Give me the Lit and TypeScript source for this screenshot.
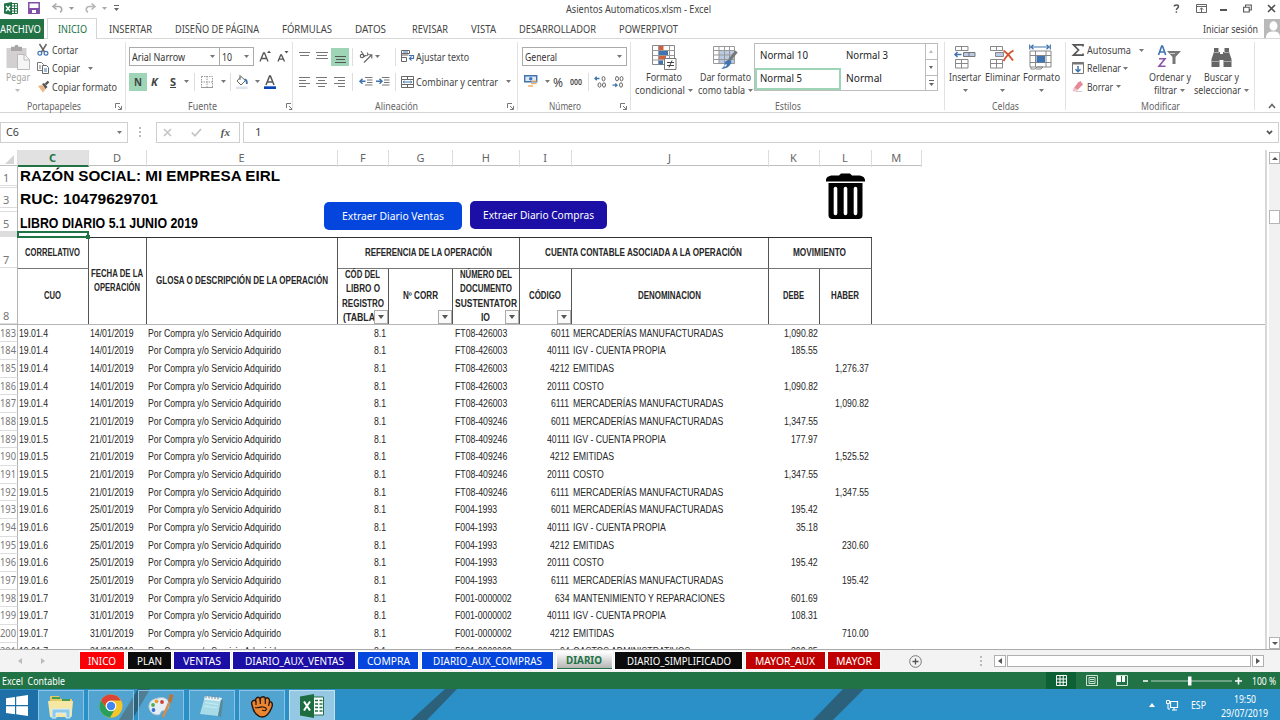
import { LitElement, html, css, svg, nothing } from "lit";
import { customElement, property } from "lit/decorators.js";
import { classMap } from "lit/directives/class-map.js";

/** A single line of text condensed horizontally to a width (w) or by a factor (s). */
@customElement("fit-text")
class FitText extends LitElement {
  @property({ type: Number }) w = 0;
  @property({ type: Number }) s = 0;
  static styles = css`
    :host { display: inline-block; white-space: pre; flex: none; text-align: left; }
    .run { display: inline-block; transform-origin: 0 50%; }
  `;
  render() {
    return html`<span class="run"><slot></slot></span>`;
  }
  firstUpdated() {
    const run = this.renderRoot.querySelector(".run") as HTMLElement;
    const natural = run.getBoundingClientRect().width;
    if (!natural) return;
    const factor = this.w ? this.w / natural : this.s || 1;
    this.style.width = `${natural * factor}px`;
    run.style.transform = `scaleX(${factor})`;
  }
}

const ft = (text: string, w: number) => html`<fit-text .w=${w}>${text}</fit-text>`;
const nar = (text: string) => html`<fit-text .s=${0.829}>${text}</fit-text>`;
const ic = (w: number, h: number, body: unknown) =>
  html`<svg class="ic" width=${w} height=${h} viewBox="0 0 ${w} ${h}" fill="none">${body}</svg>`;
const arrow = (c = "#777") => ic(5, 3, svg`<path d="M0 0H5L2.5 3Z" fill=${c} />`);
const lines = (...spans: [number, number][]) =>
  ic(12, 11, spans.map(([x, w], i) => svg`<path d="M${x} ${1.5 + i * 3}h${w}" stroke="#777" />`));
const launcher = ic(7, 7, svg`<path d="M.5 5V.5H5M3 3L6 6M6.5 3v3.5H3" stroke="#777" />`);

const ICONS = {
  excelSmall: ic(14, 13, svg`<path d="M7 1.5h6.5v10H7" fill="#fff" stroke="#217346"/><path d="M8 4h5M8 6.5h5M8 9h5M10.5 2v9" stroke="#217346"/><path d="M0 1.5L8 0v13L0 11.5Z" fill="#217346"/><path d="M2 4l4 5M6 4L2 9" stroke="#fff" stroke-width="1.3"/>`),
  save: ic(12, 12, svg`<path d="M.8.8h10.4v10.4H.8Z" stroke="#8050a8" stroke-width="1.5"/><path d="M1 6h10v5H1Z" fill="#8050a8"/><path d="M4 8h4v3H4Z" fill="#fff"/>`),
  undo: ic(12, 10, svg`<path d="M4.5.5L1 3.5l3.5 3M1.5 3.5H7a3 3 0 0 1 1 5.7" stroke="#aaa" stroke-width="1.6"/>`),
  redo: ic(12, 10, svg`<path d="M7.5.5L11 3.5l-3.5 3M10.5 3.5H5a3 3 0 0 0-1 5.7" stroke="#b5b5b5" stroke-width="1.6"/>`),
  custom: ic(5, 6, svg`<path d="M0 .5h5" stroke="#666"/><path d="M0 3h5L2.5 6Z" fill="#666"/>`),
  help: ic(7, 9, svg`<path d="M1.3 2.6C1.3.4 5.5.4 5.5 2.6 5.5 4.3 3.4 4 3.4 6M3.4 7.2v1.6" stroke="#555" stroke-width="1.5"/>`),
  ribbonOpt: ic(11, 9, svg`<path d="M.5.5h10v8H.5ZM.5 2.5h10M5.5 8V4M3.7 5.7l1.8-1.8 1.8 1.8" stroke="#666"/>`),
  min: ic(7, 9, svg`<path d="M0 6h7" stroke="#555" stroke-width="2"/>`),
  restore: ic(9, 9, svg`<path d="M.6 3.2h5.6V8H.6ZM2.5 3V1h5.8v5H6.3" stroke="#555" stroke-width="1.1"/>`),
  close: ic(9, 9, svg`<path d="M1 1l7 7M8 1L1 8" stroke="#555" stroke-width="1.6"/>`),
  avatar: ic(16, 19, svg`<path d="M0 0h16v19H0Z" fill="#b9b9b9"/><ellipse cx="9.500" cy="7" rx="4" ry="4.700" fill="#fff"/><path d="M2 19c0-5 3-6.500 7.500-6.500S16 14 16 19Z" fill="#fff"/>`),
  paste: ic(24, 25, svg`<path d="M.5 3h20v20H.5Z" fill="#d3d0d2"/><path d="M5 1.800h3.500a2 2 0 0 1 4 0H16V6H5Z" fill="#aaa6a8"/><path d="M11.500 9.500h7l5 5v10h-12Z" fill="#f6f5f6" stroke="#bbb"/><path d="M18 9.500V15h5" stroke="#bbb"/>`),
  cut: ic(12, 12, svg`<path d="M2.500 0l5 8M9.500 0l-5 8" stroke="#666" stroke-width="1.500"/><circle cx="2.800" cy="9.300" r="1.900" stroke="#3f74b0" stroke-width="1.200"/><circle cx="9" cy="9.300" r="1.900" stroke="#3f74b0" stroke-width="1.200"/>`),
  copy: ic(12, 12, svg`<path d="M.5.5h4l2 2v6h-6ZM2 4h2M2 6h2" stroke="#777"/><path d="M5.500 3.500h4l2 2v6h-6Z" fill="#fff" stroke="#666"/><path d="M7 7h3M7 9h3" stroke="#3f74b0"/>`),
  brush: ic(13, 12, svg`<path d="M1 5l4-1 3.500 4-2.500 3.500Z" fill="#eeb580"/><path d="M5 3l2-1 3.500 4-2 2Z" fill="#555"/><path d="M8.500 3.500L11.500.5" stroke="#555" stroke-width="2.400"/>`),
  borders: ic(12, 12, svg`<path d="M.5.5h11v11H.5ZM6 0v12M0 6h12" stroke="#999" stroke-dasharray="1.500 1"/><path d="M0 11.500h12" stroke="#999"/>`),
  bucket: ic(14, 14, svg`<path d="M6 1.500L10.500 5.500 6 10 2 6Z" stroke="#666" fill="#fff"/><path d="M5 0v5" stroke="#666"/><path d="M9.500 4.500c2 .2 2.500 2 2.300 4.500" stroke="#3f74b0" stroke-width="1.900"/><path d="M1 11.500h11.500v2.500H1Z" fill="#dde6ee"/>`),
  fontColor: ic(14, 14, svg`<path d="M1 11.300h12V14H1Z" fill="#0b46b8"/><path d="M3 10L6.600 1h.8L11 10M4.500 7h5" stroke="#555" stroke-width="1.500"/>`),
  orient: ic(14, 13, svg`<circle cx="3" cy="6" r="1.700" stroke="#666" stroke-width="1.200"/><path d="M2 1l4 6M8 2.800a1.600 1.600 0 1 1-2 2.400M5 12.500L12.500 5M12.800 8.500V4.700H9.500" stroke="#666" stroke-width="1.100"/>`),
  outdent: ic(14, 9, svg`<path d="M6 .5h7.500M8 3h5.500M8 5.500h5.500M6 8h7.500" stroke="#777"/><path d="M1 4.200h5.500M3.500 1.700L1 4.200l2.500 2.500" stroke="#3f74b0" stroke-width="1.500"/>`),
  indent: ic(14, 9, svg`<path d="M6 .5h7.500M8 3h5.500M8 5.500h5.500M6 8h7.500" stroke="#777"/><path d="M0 4.200h6M3.500 1.700L6 4.200 3.500 6.700" stroke="#3f74b0" stroke-width="1.500"/>`),
  wrap: ic(14, 13, svg`<path d="M.5.5h8v3h-8ZM.5 5h7M.5 7.500h5v4h-5M.5 3.500v8" stroke="#666"/><path d="M2 2h5" stroke="#3f74b0"/><path d="M8 5.500h4.500v3H8.500M10.500 6.500l-2 2 2 2" stroke="#3f74b0" stroke-width="1.200"/>`),
  merge: ic(13, 12, svg`<path d="M.5.5h12v11H.5ZM.5 3.500h12M.5 8.500h12M6.500 0v3.500M6.500 8.500V12" stroke="#666"/><path d="M2 6h9M3.500 4.800L2.200 6l1.300 1.200M9.500 4.800L10.800 6 9.500 7.200" stroke="#3f74b0"/>`),
  currency: ic(14, 13, svg`<path d="M.7.700h12v6H.7Z" stroke="#3f74b0" stroke-width="1.400" fill="#dce8f4"/><circle cx="6.700" cy="3.700" r="1.700" fill="#3f74b0"/><path d="M7.500 5.500h5v1.300h-5ZM7 8h5.500v1.300H7ZM4 10.300h5v1.500H4Z" fill="#efb168"/>`),
  incDec: ic(13, 12, svg`<path d="M1 2.500h4.500M2.700.8L1 2.500l1.700 1.700" stroke="#3f74b0" stroke-width="1.300"/><ellipse cx="9.500" cy="2.700" rx="1.500" ry="2.200" stroke="#666"/><ellipse cx="5.500" cy="9" rx="1.500" ry="2.200" stroke="#666"/><ellipse cx="10" cy="9" rx="1.500" ry="2.200" stroke="#666"/>`),
  decDec: ic(13, 12, svg`<path d="M.5 9.200H5M3.300 7.500L5 9.200l-1.700 1.700" stroke="#3f74b0" stroke-width="1.300"/><ellipse cx="5" cy="2.700" rx="1.500" ry="2.200" stroke="#666"/><ellipse cx="9.500" cy="2.700" rx="1.500" ry="2.200" stroke="#666"/><ellipse cx="9" cy="9" rx="1.500" ry="2.200" stroke="#666"/>`),
  condFmt: ic(25, 25, svg`<path d="M.5.5h22v19H.5Z" fill="#fff" stroke="#888"/><path d="M.5 5.500h22M.5 10.500h22M.5 15h22M6.500.5v19M17.500.5v19" stroke="#999"/><path d="M7 1h4.500v4H7ZM7 11h7v3.500H7Z" fill="#d0603e"/><path d="M7 6h9v4H7ZM7 15.500h4v4H7Z" fill="#3f74b0"/><path d="M12.500 13.500h11.500v11H12.500Z" fill="#fff" stroke="#777"/><path d="M15 17.500h7M15 20.500h7M20 15.500l-3 7" stroke="#444"/>`),
  tableFmt: ic(25, 25, svg`<path d="M.5 1.500h21v17H.5Z" fill="#fff" stroke="#999"/><path d="M6 6h15v12H6Z" fill="#b9cbe4"/><path d="M.5 5.500h21M.5 10h21M.5 14.500h21M6 1.500v17M11.500 1.500v17M16.500 1.500v17" stroke="#999"/><path d="M23.500 6.500L16.500 15" stroke="#777" stroke-width="3"/><path d="M16 14.500l2.500 2.300c-1 4-4 7-10.500 7.200 3.500-1.500 3-4.500 4.500-7.500Z" fill="#3f74b0"/><path d="M13.500 19.500l-2 2" stroke="#fff" stroke-width="1.500"/>`),
  insert: ic(22, 23, svg`<path d="M1.500.5h12.500v4H1.500ZM7.500.5v4M1.500 13.500h12.500v8.500H1.500ZM7.500 13.500V22M1.500 17.500h12.500" stroke="#888"/><path d="M9.500 6.500h11.500v4H9.500Z" fill="#b9cbe4" stroke="#777"/><path d="M15 6.500v4" stroke="#777"/><path d="M.5 8.500h7M3.500 6L1 8.500 3.500 11" stroke="#3f74b0" stroke-width="1.500"/>`),
  remove: ic(25, 23, svg`<path d="M.5.5h12v4H.5ZM6.500.5v4M.5 13.500h12v8.500H.5ZM6.500 13.500V22M.5 17.500h12" stroke="#888"/><path d="M5.500 6.500h8v4h-8Z" fill="#b9cbe4" stroke="#888"/><path d="M13.500 4.500c3 2 7 6 9.500 10M23.500 4.500c-4 2-7.500 6-10 10.500" stroke="#d35230" stroke-width="1.800"/>`),
  format: ic(24, 26, svg`<path d="M2 3h18M4.500.8L2 3l2.500 2.200M17.500.8L20 3l-2.500 2.200M.7.500v5M21.300.5v5" stroke="#3f74b0" stroke-width="1.200"/><path d="M1 7h21v16H1Z" fill="#fff" stroke="#888"/><path d="M1 11.500h21M1 18.500h21M6.500 7v16M17 7v16" stroke="#888"/><path d="M7.500 12h8.500v6.500H7.500Z" fill="#3f74b0"/><path d="M2 23v2h4l2-2h6l-2 2H7" stroke="#888"/>`),
  sigma: ic(12, 12, svg`<path d="M11 2.500V.900H1.500L6.500 6l-5 5.100H11V9.500" stroke="#555" stroke-width="1.700"/>`),
  fill: ic(12, 12, svg`<path d="M.5.5h11v11H.5Z" stroke="#777"/><path d="M.5 1.500h11" stroke="#777" stroke-width="2"/><path d="M6 4v6M3.500 7.300L6 9.800l2.500-2.500" stroke="#3f74b0" stroke-width="1.500"/>`),
  erase: ic(12, 11, svg`<path d="M6 1.500L8.500 0 11 3.500 5.500 9 2 7Z" fill="#e58a98"/><path d="M2 6.500l3.500 3-1.500 1H1.500L.5 9Z" fill="#f3c3ca"/><path d="M4 10.500h6" stroke="#ccc"/>`),
  sort: ic(25, 24, svg`<path d="M1.500 10L4.700 1h.8L8.700 10M3 7h4.500" stroke="#3f74b0" stroke-width="1.600"/><path d="M2 13.800h6L2 21.200h6.500" stroke="#8a56ac" stroke-width="1.600"/><path d="M10 6h14l-5.500 6v7h-3v-7Z" fill="#777"/><path d="M13 8.500h5" stroke="#ccc"/>`),
  find: ic(23, 21, svg`<path d="M4 1h4.500v4H10v2h3V5h1.500V1H19v4l2.500 7v8h-8v-7h-4v7h-8v-8L4 5Z" fill="#666"/><path d="M3.500 5.500h5.500M14 5.500h5.500M2 14.500h7M14 14.500h7" stroke="#aaa"/>`),
  chevUp: ic(8, 6, svg`<path d="M1 5l3-3.500L7 5" stroke="#666" stroke-width="1.600"/>`),
  chevDown: ic(7, 5, svg`<path d="M1 .8L3.500 3.500 6 .8" stroke="#555" stroke-width="1.800"/>`),
  cross: ic(9, 9, svg`<path d="M1 1l7 7M8 1L1 8" stroke="#c3c3c3" stroke-width="1.500"/>`),
  check: ic(11, 9, svg`<path d="M.8 4.500L4 7.800 10 1" stroke="#c3c3c3" stroke-width="1.700"/>`),
  trash: ic(41, 47, svg`<path d="M1 7.500C1 4 4 2.600 8 2.600h6L16 .5h9l2 2.100h6c4 0 7 1.400 7 4.900v1H1Z" fill="#000"/><path d="M3.500 10h34v32a4 4 0 0 1-4 4h-26a4 4 0 0 1-4-4Z" fill="#000"/><path d="M10.500 15.500v25M20.500 15.500v25M30.500 15.500v25" stroke="#fff" stroke-width="3.600" stroke-linecap="round"/>`),
  plus: ic(13, 13, svg`<circle cx="6.500" cy="6.500" r="5.800" stroke="#777"/><path d="M6.500 3.500v6M3.500 6.500h6" stroke="#555" stroke-width="1.300"/>`),
  viewNormal: ic(11, 11, svg`<path d="M.5.5h10v10H.5ZM.5 4h10M.5 7.200h10M4 .5v10M7.200.5v10" stroke="#fff"/>`),
  viewPage: ic(12, 11, svg`<path d="M.5.500h11v10H.5ZM3 2.500h6v6H3ZM4 4.500h4M4 6.500h4" stroke="#cfe3d7"/>`),
  viewBreak: ic(12, 11, svg`<path d="M.5.500h11v10H.5Z" stroke="#cfe3d7"/><path d="M1 1h4v6H1ZM6 1h3v6H6Z" fill="#fff"/>`),
  windows: ic(22, 21, svg`<path d="M0 3.200L9 2v8H0ZM10.200 1.800L22 0v10H10.200ZM0 11.200h9v8L0 18ZM10.200 11.200H22V21l-11.800-1.700Z" fill="#fff"/>`),
  folder: ic(28, 25, svg`<path d="M3 2h9l2 3h11v17H3Z" fill="#e4c964"/><path d="M5 4h8M15 6h8" stroke="#4a9a54" stroke-width="2"/><path d="M1 7h25l-1.500 16H3Z" fill="#f6e8a4"/><path d="M5 24v-9h18v9h-4v-5H9v5Z" fill="#8cc9ea" stroke="#d5effb"/>`),
  chrome: ic(24, 24, svg`<circle cx="12" cy="12" r="11.500" fill="#f5c62c"/><path d="M2 6.200A11.500 11.500 0 0 1 22 6.500H12a5.500 5.500 0 0 0-5 8Z" fill="#dc4437"/><path d="M2 6.200A11.500 11.500 0 0 0 11 23.500l5-8.500a5.500 5.500 0 0 1-9-1Z" fill="#26a05a"/><circle cx="12" cy="12" r="5.300" fill="#fff"/><circle cx="12" cy="12" r="4.200" fill="#4285f4"/>`),
  paint: ic(26, 26, svg`<path d="M10 5c7-2 12 2 11 8s-5 4-7 5-1 4-4 4C4 22 0 17 1 12s5-6 9-7Z" fill="#e4eef4" stroke="#a9bfcc"/><circle cx="5" cy="12" r="1.900" fill="#4caf50"/><circle cx="8.500" cy="8.300" r="1.900" fill="#e8a13a"/><circle cx="5.500" cy="17" r="1.900" fill="#3b6fd0"/><circle cx="14" cy="9" r="1.900" fill="#cf3f35"/><path d="M15 24L21 10" stroke="#d58c4b" stroke-width="2.500"/><path d="M20 9l1.500-8 4 1L23.500 10Z" fill="#b9753e"/>`),
  notepad: ic(25, 25, svg`<path d="M6 2l17 2-4 18L1 20Z" fill="#a8dbe8"/><path d="M6 2l17 2-.8 3.500-17-2Z" fill="#e7f3f5"/><path d="M22 5l2 2-2 16-3-1Z" fill="#5b8797"/><path d="M6 8.500l13 2M5 12l13 2" stroke="#c9edf5"/><path d="M7 1v3M10 1.300v3M13 1.700v3M16 2v3M19 2.300v3" stroke="#789"/>`),
  fist: ic(24, 23, svg`<path d="M2 10c-1.500-4 2-5.500 3.500-4C5.500 1.500 9.500 1.500 10 4c1-3 5-3 5.500 0C17 1.500 20 3 19.500 7c3-1 3.500 3 2 6-2 5-4.500 9-9 9S3.500 18 2 10Z" fill="#e88634" stroke="#2a160c" stroke-width="1.400"/><path d="M6 6v4M10.300 4v5M15.300 4v5M19.500 7l-1 4M5 12.500c3 1 5-1 8-.5s4 1.500 3 3-3 .5-4 0" stroke="#2a160c" stroke-width="1.200"/>`),
  excelBig: ic(24, 24, svg`<path d="M12 3h11.500v18H12" fill="#fff" stroke="#217346"/><path d="M15 6.500h3M19.500 6.500h3M15 10h3M19.500 10h3M15 13.500h3M19.500 13.500h3M15 17h3M19.500 17h3" stroke="#217346" stroke-width="1.600"/><path d="M0 2.500L14 0v24L0 21.500Z" fill="#1d6d40"/><path d="M4 7.500l6 9M10 7.500l-6 9" stroke="#fff" stroke-width="2"/>`),
  network: ic(12, 11, svg`<path d="M4.500 1.500h7v6h-7ZM6 10h5M8 8v2" stroke="#fff" stroke-width="1.200"/><path d="M.5.5h3v3h-3ZM2 3.500V9h2" stroke="#fff"/>`),
};

type Row = [number, string, string, string, string, string, string, string];
const G = "Por Compra y/o Servicio Adquirido";
const entry = (n: number, cuo: string, date: string, doc: string, cod: string, name: string, debe = "", haber = ""): Row =>
  [n, cuo, date, doc, cod, name, debe, haber];
const MM = "MERCADERÍAS MANUFACTURADAS";
const IGV = "IGV - CUENTA PROPIA";
const ROWS: Row[] = [
  entry(183, "19.01.4", "14/01/2019", "FT08-426003", "6011", MM, "1,090.82"),
  entry(184, "19.01.4", "14/01/2019", "FT08-426003", "40111", IGV, "185.55"),
  entry(185, "19.01.4", "14/01/2019", "FT08-426003", "4212", "EMITIDAS", "", "1,276.37"),
  entry(186, "19.01.4", "14/01/2019", "FT08-426003", "20111", "COSTO", "1,090.82"),
  entry(187, "19.01.4", "14/01/2019", "FT08-426003", "6111", MM, "", "1,090.82"),
  entry(188, "19.01.5", "21/01/2019", "FT08-409246", "6011", MM, "1,347.55"),
  entry(189, "19.01.5", "21/01/2019", "FT08-409246", "40111", IGV, "177.97"),
  entry(190, "19.01.5", "21/01/2019", "FT08-409246", "4212", "EMITIDAS", "", "1,525.52"),
  entry(191, "19.01.5", "21/01/2019", "FT08-409246", "20111", "COSTO", "1,347.55"),
  entry(192, "19.01.5", "21/01/2019", "FT08-409246", "6111", MM, "", "1,347.55"),
  entry(193, "19.01.6", "25/01/2019", "F004-1993", "6011", MM, "195.42"),
  entry(194, "19.01.6", "25/01/2019", "F004-1993", "40111", IGV, "35.18"),
  entry(195, "19.01.6", "25/01/2019", "F004-1993", "4212", "EMITIDAS", "", "230.60"),
  entry(196, "19.01.6", "25/01/2019", "F004-1993", "20111", "COSTO", "195.42"),
  entry(197, "19.01.6", "25/01/2019", "F004-1993", "6111", MM, "", "195.42"),
  entry(198, "19.01.7", "31/01/2019", "F001-0000002", "634", "MANTENIMIENTO Y REPARACIONES", "601.69"),
  entry(199, "19.01.7", "31/01/2019", "F001-0000002", "40111", IGV, "108.31"),
  entry(200, "19.01.7", "31/01/2019", "F001-0000002", "4212", "EMITIDAS", "", "710.00"),
  entry(201, "19.01.7", "31/01/2019", "F001-0000002", "94", "GASTOS ADMINISTRATIVOS", "392.85"),
];

const SHEETS: [string, string, number][] = [
  ["INICO", "red", 28], ["PLAN", "black", 25], ["VENTAS", "navy", 38], ["DIARIO_AUX_VENTAS", "navy", 99],
  ["COMPRA", "blue", 43], ["DIARIO_AUX_COMPRAS", "blue", 109], ["DIARIO", "current", 36],
  ["DIARIO_SIMPLIFICADO", "black", 104], ["MAYOR_AUX", "wine", 60], ["MAYOR", "wine", 36],
];

@customElement("app-root")
class AppRoot extends LitElement {
  static styles = css`
    :host { display: block; width: 1280px; height: 720px; overflow: hidden; background: #fff; color: #444;
      font: 11px/14px "Noto Sans", "Open Sans", sans-serif; }
    * { box-sizing: border-box; }
    .ic { display: block; flex: none; overflow: visible; }
    .g { display: grid; align-items: center; }
    .app { display: flex; flex-direction: column; height: 720px; }

    .title { height: 18px; grid-template-columns: 4px 24px 24px 17px 15px 18px 12px 452px 607px 23px 24px 23px 24px 13px; padding-bottom: 3px; color: #444; }
    .title .name { height: 14px; margin-top: 2px; }
    .tabs { height: 21px; border-bottom: 1px solid #d8d8d8; color: #444; font-size: 11px;
      grid-template-columns: 44px 3px 50px 12px 66px 107px 73px 57px 59px 48px 100px 584px 61px 16px; }
    .file { background: #217346; color: #fff; height: 20px; display: flex; align-items: center; }
    .active { height: 21px; border: 1px solid #d4d4d4; border-bottom: 0; background: #fff; color: #217346; display: flex; align-items: center; justify-content: center; }

    .ribbon { height: 74px; display: grid; grid-template-columns: 126px 167px 225px 112.5px 314px 121px 189px 26px; border-bottom: 1px solid #d5d5d5; }
    .group { display: grid; grid-template-rows: 60px 14px; position: relative; }
    .group::after { content: ""; position: absolute; right: 0; top: 3px; bottom: 3px; width: 1px; background: #e2e2e2; }
    .caption { display: grid; grid-template-columns: 1fr auto 1fr; align-items: center; color: #666; font-size: 10px; line-height: 12px; }
    .caption.launch { padding-right: 18px; }
    .caption .ic { justify-self: end; margin-right: -14px; }
    .two { display: grid; grid-template-rows: 20px 20px; row-gap: 5px; padding-top: 7.500px; align-items: center; }
    .stack3 { display: grid; grid-template-rows: repeat(3, 18.300px); padding-top: 2px; align-items: center; }
    .big { display: grid; grid-template-rows: 26px 14px 12px; padding-top: 5px; justify-items: center; align-items: center; }
    .big .foot { display: flex; align-items: center; gap: 3px; }
    .dim { color: #a5a5a5; }
    .sep { width: 1px; height: 18px; background: #dedede; }
    .clip { grid-template-columns: 37px 89px; align-items: start; }
    .clip .big { margin-left: -2px; }
    .clip .r { grid-template-columns: 15px 38px 20px; }
    .clip .r.c { grid-template-columns: 15px 36px 20px; }
    .box { display: flex; align-items: center; justify-content: space-between; border: 1px solid #ababab; height: 19px; padding: 0 4px 0 2px; background: #fff; color: #333; }
    .font { padding-left: 3px; }
    .f1 { grid-template-columns: 91px 34px 5px 18px 20px; }
    .f1 .box + .box { border-left: 0; }
    .f2 { grid-template-columns: 22px 19px 14px 10px 7px 20px 9px 5px 20px 8px 20px; }
    .on { background: #9fd5b7; height: 18px; width: 18px; display: flex; align-items: center; justify-content: center; }
    .b { font-weight: 700; } .i { font-style: italic; } .u { text-decoration: underline; }
    .align { padding-left: 6px; }
    .a1 { grid-template-columns: 17px 15px 21px 7px 16px 20px 6px 15px 60px; }
    .a2 { grid-template-columns: 17px 18px 18px 7px 17px 19px 6px 15px 90px 10px; }
    .num { padding-left: 3.500px; }
    .num .box { width: 105px; }
    .n2 { grid-template-columns: 21px 8px 17px 18px 6px 18px 14px; padding-left: 2px; }
    .pct { font-size: 13px; } .thousands { font-size: 8.500px; font-weight: 600; }
    .styles { grid-template-columns: 67px 52px 188px; align-items: start; }
    .gallery { margin: 4px 0 0 4px; height: 48px; border: 1px solid #bcbcbc; display: grid; grid-template-columns: 1fr 12px; font-size: 11.500px; }
    .cells { display: grid; grid-template-columns: 86px 84px; grid-template-rows: 23px 23px; align-items: center; color: #222; }
    .cells div { height: 22px; display: flex; align-items: center; border: 2px solid transparent; padding: 0 0 1px 3px; }
    .cells .sel { border-color: #9fd5b7; }
    .steps { display: grid; grid-template-rows: 1fr 1fr 1fr; border-left: 1px solid #bcbcbc; }
    .steps div { display: flex; align-items: center; justify-content: center; }
    .steps div + div { border-top: 1px solid #bcbcbc; }
    .cellsg { grid-template-columns: 37px 37px 41px; padding-left: 2px; align-items: start; }
    .edit { grid-template-columns: 74px 48px 56px; padding-left: 6px; align-items: start; }
    .edit .r1 { grid-template-columns: 15px 52px 5px; } .edit .r2 { grid-template-columns: 15px 36px 5px; } .edit .r3 { grid-template-columns: 15px 29px 5px; }
    .collapse { display: flex; align-items: flex-end; justify-content: center; padding: 0 0 4px 8px; }

    .formula { height: 37px; display: grid; align-items: center; padding-top: 1px; font-size: 11.500px;
      grid-template-columns: 128px 11px 17px 84px 3px 1036px; }
    .formula .fb { height: 21px; border: 1px solid #cfcfcf; display: flex; align-items: center; justify-content: space-between; padding: 0 5px; }
    .formula .tools { padding: 0 9px 0 6px; }
    .fx { font: italic 700 11px "Liberation Serif", serif; color: #555; }
    .dots { display: flex; flex-direction: column; gap: 2px; width: 2px; }
    .dots i { width: 2px; height: 2px; background: #bbb; }

    .mid { height: 499px; display: grid; grid-template-columns: 1268px 12px; }
    .sheet { border-right: 2px solid #d8d8d8; overflow: hidden; display: grid; grid-template-rows: 16px 158.500px 1fr; margin-right: 1px; }
    .cols { display: grid; width: 922px; grid-template-columns: 17.500px 71px 58px 191px 51.500px 64px 66.500px 52px 197px 51px 52px 50.300px; border-bottom: 1px solid #bfbfbf; font-size: 11px; color: #666; height: 16px; }
    .cols div { border-right: 1px solid #dcdcdc; text-align: center; line-height: 15px; }
    .cols .sel { background: #e1e1e1; color: #217346; font-weight: 700; border-bottom: 2px solid #217346; }
    .corner { display: flex; justify-content: flex-end; align-items: flex-end; padding: 0 3px 3px 0; }
    .frozen { display: grid; grid-template-columns: 17.500px 1fr; border-bottom: 1px solid #b5b5b5; overflow: hidden; }
    .heads { display: grid; grid-template-rows: 19.500px 2.500px 20px 4px 20px 5px 31px 1fr; border-right: 1px solid #b5b5b5; color: #777; }
    .heads div { border-bottom: 1px solid #ddd; display: flex; align-items: flex-end; justify-content: center; padding: 0 4px 1px 0; line-height: 12px; }
    .heads .sel { background: #ddd; }
    .arial { font-family: "Liberation Sans", Arial, sans-serif; color: #262626; }
    .top { height: 71px; position: relative; padding-left: 2.500px; font-weight: 700; color: #000; display: grid; grid-template-rows: 20px 25px 23px; align-items: center; font-size: 15.500px; line-height: 18px; }
    .top .narrow { font-size: 14.500px; }
    .shape { position: absolute; border-radius: 5px; color: #fff; font: 11.500px/14px "Noto Sans", sans-serif; display: flex; align-items: center; justify-content: center; padding-bottom: 1px; }
    .s1 { left: 306px; top: 36px; width: 138px; height: 28px; background: #0446dd; }
    .s2 { left: 452.500px; top: 35px; width: 137px; height: 28px; background: #1b0fa5; }
    .s3 { left: 807.500px; top: 7px; }
    .cursor { position: absolute; left: -1px; top: 65px; width: 72px; height: 7px; border: 2px solid #217346; z-index: 1; }
    .cursor::after { content: ""; position: absolute; right: -3px; bottom: -3px; width: 4px; height: 4px; background: #217346; }
    .hdr { display: grid; width: 854.500px; height: 87px; grid-template-columns: 71px 58px 191px 51.500px 64px 66.500px 52px 197px 51px 52.500px; grid-template-rows: 31px 55px; border-top: 1px solid #333; font-size: 10px; font-weight: 700; line-height: 14.300px; }
    .hdr > div { border-right: 1px solid #555; border-bottom: 1px solid #777; display: flex; flex-direction: column; align-items: center; justify-content: center; position: relative; }
    .hdr > .low { border-bottom: 0; min-height: 0; }
    .span2 { grid-column: span 2; } .span3 { grid-column: span 3; } .tall { grid-row: span 2; }
    .filter { position: absolute; right: 0; bottom: 0; width: 14px; height: 14px; background: #fafafa; border: 1px solid #aaa; display: flex; align-items: center; justify-content: center; }
    .body { overflow: hidden; font-size: 10.500px; }
    .row { display: grid; height: 17.680px; line-height: 16px;
      grid-template-columns: 17.500px 71px 58px 191px 49px 67.500px 64.500px 51px 199px 49.200px 51.300px; }
    .row > div { padding-left: 1.800px; }
    .row > .rh { height: 17.680px; border-right: 1px solid #b5b5b5; border-bottom: 1px solid #ddd; padding: 0; color: #777; font: 11px/16px "Noto Sans", sans-serif; display: flex; justify-content: flex-start; }
    .row > .r { text-align: right; padding: 0; }
    .row > .n { padding-left: 3.600px; }
    .row > .d { padding-left: 0.500px; }
    .vs { background: #f1f1f1; display: grid; grid-template-rows: 12px 46px 14px 1fr 12px; margin-top: 2px; margin-left: 1px; }
    .vs .btn { background: #fff; border: 1px solid #b5b5b5; display: flex; align-items: center; justify-content: center; }

    .sheets { height: 23px; border-top: 1px solid #ababab; background: #f3f3f3; display: grid; align-items: center; font-size: 11px;
      grid-template-columns: 18px 23px 39px 829px 71px 14px 270px; }
    .tabrow { display: grid; height: 22px; align-items: center; padding-bottom: 1px; grid-template-columns: 44px 43.200px 55.500px 121.300px 60px 131.500px 54.500px 127px 79px 52px; column-gap: 3.600px; }
    .tab { height: 17px; color: #fff; display: flex; align-items: center; justify-content: center; outline: 1px solid #fff; }
    .red { background: #fb0007; } .black { background: #0b0b0b; } .navy { background: #1b0fa5; } .blue { background: #0446dd; } .wine { background: #c00000; }
    .current { background: linear-gradient(#fff, #b5b5b5); color: #217346; font-weight: 700; border-bottom: 1px solid #217346; }
    .hs { display: grid; grid-template-columns: 12px 1fr 12px; column-gap: 1px; height: 12px; }
    .hs div { background: #fff; border: 1px solid #b0b0b0; display: flex; align-items: center; justify-content: center; }

    .status { height: 17px; background: #217346; color: #fff; display: grid; align-items: center; font-size: 10px; grid-template-columns: 2px 1044px 30px 31px 30px 6px 92px 17px 28px; }
    .status .vn { background: #0c6033; height: 17px; width: 30px; display: flex; align-items: center; justify-content: center; }
    .status .c { display: flex; justify-content: center; }

    .task { height: 31px; background: linear-gradient(#2c8fc6, #2991c8); display: grid; position: relative; color: #fff; grid-template-columns: 38px 298px 813px 17px 25px 27px 53px; align-items: center; overflow: hidden; }
    .streaks { position: absolute; left: 0; top: 0; }
    .start { height: 31px; background: #1e6fa8; display: flex; align-items: center; padding-left: 6px; z-index: 1; }
    .pins { display: grid; grid-template-columns: repeat(6, 46px); column-gap: 4.200px; z-index: 1; }
    .pin { height: 31px; margin-top: 1px; border: 1px solid #8cc3e2; border-bottom: 0; background: #ffffff2e; display: flex; align-items: center; justify-content: center; }
    .pin.live { background: #ffffff80; border-color: #c2e0f0; }
    .tray { font-size: 10px; }
    .clock { display: grid; grid-template-rows: 13.500px 13.500px; justify-items: center; font-size: 10px; line-height: 14px; padding-top: 1px; }
  `;

  private caption(text: string, w: number, launch = true) {
    return html`<div class=${classMap({ caption: true, launch })}><span></span>${ft(text, w)}${launch ? launcher : nothing}</div>`;
  }

  private big(icon: unknown, top: [string, number], foot: unknown) {
    return html`<div class="big">${icon}${ft(...top)}<div class="foot">${foot}${arrow()}</div></div>`;
  }

  private ribbon() {
    return html`
      <div class="ribbon">
        <div class="group">
          <div class="g clip">
            <div class="big dim">${ICONS.paste}${ft("Pegar", 24)}<div class="foot">${arrow("#bbb")}</div></div>
            <div class="stack3">
              <div class="g r">${ICONS.cut}${ft("Cortar", 26)}</div>
              <div class="g r c">${ICONS.copy}${ft("Copiar", 28)}${arrow()}</div>
              <div class="g r">${ICONS.brush}${ft("Copiar formato", 65)}</div>
            </div>
          </div>
          ${this.caption("Portapapeles", 54)}
        </div>
        <div class="group">
          <div class="two font">
            <div class="g f1">
              <div class="box">${ft("Arial Narrow", 53)}${arrow()}</div>
              <div class="box">${ft("10", 10)}${arrow()}</div><span></span>
              ${ic(12, 13, svg`<path d="M1 11.500L4.500 3h1L9 11.500M2.500 8.500h5" stroke="#555" stroke-width="1.300"/><path d="M8 3h4L10 .5Z" fill="#555"/>`)}
              ${ic(12, 13, svg`<path d="M1 11.500L3.700 5h.8L7.500 11.500M2 9.200h4.500" stroke="#555" stroke-width="1.300"/><path d="M7.500 1h4L9.500 3.500Z" fill="#555"/>`)}
            </div>
            <div class="g f2">
              <div class="on b">${ft("N", 8)}</div><span class="b i">K</span><span class="b u">S</span>${arrow()}
              <i class="sep"></i>${ICONS.borders}${arrow()}<i class="sep"></i>${ICONS.bucket}${arrow()}
              <div class="g">${ICONS.fontColor}</div>
            </div>
          </div>
          ${this.caption("Fuente", 29)}
        </div>
        <div class="group">
          <div class="two align">
            <div class="g a1">
              ${lines([0, 11], [1, 9])}${lines([0, 12], [1, 10], [0, 12])}
              <div class="on">${ic(11, 13, svg`<path d="M0 6.500h11M1 9.500h9M0 12.500h11" stroke="#555"/>`)}</div>
              <i class="sep"></i>${ICONS.orient}${arrow()}<i class="sep"></i>${ICONS.wrap}${ft("Ajustar texto", 53)}
            </div>
            <div class="g a2">
              ${lines([0, 11], [0, 7], [0, 11], [0, 7])}${lines([0, 11], [2, 7], [0, 11], [2, 7])}${lines([0, 11], [4, 7], [0, 11], [4, 7])}
              <i class="sep"></i>${ICONS.outdent}${ICONS.indent}<i class="sep"></i>${ICONS.merge}${ft("Combinar y centrar", 82)}${arrow()}
            </div>
          </div>
          ${this.caption("Alineación", 43)}
        </div>
        <div class="group">
          <div class="two num">
            <div class="box">${ft("General", 32)}${arrow()}</div>
            <div class="g n2">${ICONS.currency}${arrow()}<span class="pct">${ft("%", 10)}</span><span class="thousands">${ft("000", 12)}</span><i class="sep"></i>${ICONS.incDec}${ICONS.decDec}</div>
          </div>
          ${this.caption("Número", 32)}
        </div>
        <div class="group">
          <div class="g styles">
            ${this.big(ICONS.condFmt, ["Formato", 36], ft("condicional", 50))}
            ${this.big(ICONS.tableFmt, ["Dar formato", 51], ft("como tabla", 47))}
            <div class="gallery">
              <div class="cells">
                <div>${ft("Normal 10", 48)}</div><div>${ft("Normal 3", 42)}</div>
                <div class="sel">${ft("Normal 5", 42)}</div><div>${ft("Normal", 36)}</div>
              </div>
              <div class="steps">
                <div>${ic(4, 3, svg`<path d="M0 3h4L2 0Z" fill="#bbb"/>`)}</div><div>${ic(4, 3, svg`<path d="M0 0h4L2 3Z" fill="#666"/>`)}</div><div>${ICONS.custom}</div>
              </div>
            </div>
          </div>
          ${this.caption("Estilos", 26, false)}
        </div>
        <div class="group">
          <div class="g cellsg">
            ${this.big(ICONS.insert, ["Insertar", 32], nothing)}
            ${this.big(ICONS.remove, ["Eliminar", 35], nothing)}
            ${this.big(ICONS.format, ["Formato", 37], nothing)}
          </div>
          ${this.caption("Celdas", 27, false)}
        </div>
        <div class="group">
          <div class="g edit">
            <div class="stack3">
              <div class="g r1">${ICONS.sigma}${ft("Autosuma", 44)}${arrow()}</div>
              <div class="g r2">${ICONS.fill}${ft("Rellenar", 34)}${arrow()}</div>
              <div class="g r3">${ICONS.erase}${ft("Borrar", 26)}${arrow()}</div>
            </div>
            ${this.big(ICONS.sort, ["Ordenar y", 42], ft("filtrar", 23))}
            ${this.big(ICONS.find, ["Buscar y", 35], ft("seleccionar", 47))}
          </div>
          ${this.caption("Modificar", 39, false)}
        </div>
        <div class="collapse">${ICONS.chevUp}</div>
      </div>`;
  }

  private sheet() {
    const filter = html`<span class="filter">${ic(6, 4, svg`<path d="M0 0h6L3 4Z" fill="#555"/>`)}</span>`;
    return html`
      <div class="mid">
        <div class="sheet">
          <div class="cols">
            <div class="corner">${ic(9, 9, svg`<path d="M9 0v9H0Z" fill="#d5d5d5"/>`)}</div>
            ${[..."CDEFGHIJKLM"].map((c) => html`<div class=${classMap({ sel: c === "C" })}>${c}</div>`)}
          </div>
          <div class="frozen">
            <div class="heads"><div>1</div><div></div><div>3</div><div></div><div>5</div><div class="sel"></div><div>7</div><div>8</div></div>
            <div class="arial">
              <div class="top">
                ${ft("RAZÓN SOCIAL: MI EMPRESA EIRL", 260)}${ft("RUC: 10479629701", 138)}
                <span class="narrow">${ft("LIBRO DIARIO 5.1 JUNIO 2019", 178)}</span>
                <div class="shape s1">${ft("Extraer Diario Ventas", 102)}</div>
                <div class="shape s2">${ft("Extraer Diario Compras", 111)}</div>
                <div class="shape s3">${ICONS.trash}</div>
                <div class="cursor"></div>
              </div>
              <div class="hdr">
                <div>${ft("CORRELATIVO", 55)}</div>
                <div class="tall low">${ft("FECHA DE LA", 52)}${ft("OPERACIÓN", 46)}</div>
                <div class="tall low">${ft("GLOSA O DESCRIPCIÓN DE LA OPERACIÓN", 172)}</div>
                <div class="span3">${ft("REFERENCIA DE LA OPERACIÓN", 127)}</div>
                <div class="span2">${ft("CUENTA CONTABLE ASOCIADA A LA OPERACIÓN", 197)}</div>
                <div class="span2">${ft("MOVIMIENTO", 53)}</div>
                <div class="low">${ft("CUO", 17)}</div>
                <div class="low">${ft("CÓD DEL", 35)}${ft("LIBRO O", 34)}${ft("REGISTRO", 42)}${ft("(TABLA   ", 39)}${filter}</div>
                <div class="low">${ft("Nº CORR", 35)}${filter}</div>
                <div class="low">${ft("NÚMERO DEL", 52)}${ft("DOCUMENTO", 52)}${ft("SUSTENTATOR", 62)}${ft("IO", 9)}${filter}</div>
                <div class="low">${ft("CÓDIGO", 32)}${filter}</div>
                <div class="low">${ft("DENOMINACION", 63)}</div>
                <div class="low">${ft("DEBE", 21)}</div>
                <div class="low">${ft("HABER", 28)}</div>
              </div>
            </div>
          </div>
          <div class="body arial">
            ${ROWS.map(([n, cuo, date, doc, cod, name, debe, haber]) => html`
              <div class="row">
                <div class="rh">${ft(String(n), 16)}</div>
                <div>${nar(cuo)}</div><div>${nar(date)}</div><div>${nar(G)}</div>
                <div class="r">${nar("8.1")}</div><div></div><div class="d">${nar(doc)}</div>
                <div class="r">${nar(cod)}</div><div class="n">${nar(name)}</div>
                <div class="r">${debe ? nar(debe) : nothing}</div><div class="r">${haber ? nar(haber) : nothing}</div>
              </div>`)}
          </div>
        </div>
        <div class="vs">
          <div class="btn">${ic(6, 3, svg`<path d="M0 3h6L3 0Z" fill="#555"/>`)}</div><span></span><div class="btn"></div><span></span>
          <div class="btn">${ic(6, 3, svg`<path d="M0 0h6L3 3Z" fill="#555"/>`)}</div>
        </div>
      </div>`;
  }

  render() {
    const dots = html`<div class="dots"><i></i><i></i><i></i></div>`;
    return html`
      <div class="app">
        <div class="g title">
          <span></span>${ICONS.excelSmall}${ICONS.save}${ICONS.undo}${arrow("#999")}${ICONS.redo}${arrow("#aaa")}<span>${ICONS.custom}</span>
          <span class="name">${ft("Asientos Automaticos.xlsm - Excel", 145)}</span>
          ${ICONS.help}${ICONS.ribbonOpt}${ICONS.min}${ICONS.restore}${ICONS.close}
        </div>
        <div class="g tabs">
          <div class="file">${ft("ARCHIVO", 41)}</div><span></span><div class="active">${ft("INICIO", 29)}</div><span></span>
          ${ft("INSERTAR", 43)}${ft("DISEÑO DE PÁGINA", 84)}${ft("FÓRMULAS", 50)}${ft("DATOS", 31)}${ft("REVISAR", 36)}${ft("VISTA", 25)}${ft("DESARROLLADOR", 77)}${ft("POWERPIVOT", 59)}
          ${ft("Iniciar sesión", 55)}${ICONS.avatar}
        </div>
        ${this.ribbon()}
        <div class="formula">
          <div class="fb">${ft("C6", 13)}${arrow()}</div><span></span>${dots}
          <div class="fb tools">${ICONS.cross}${ICONS.check}<span class="fx">fx</span></div><span></span>
          <div class="fb"><span>&nbsp;&nbsp;1</span>${ICONS.chevDown}</div>
        </div>
        ${this.sheet()}
        <div class="sheets">
          <span></span>${ic(4, 6, svg`<path d="M4 0v6L0 3Z" fill="#bbb"/>`)}${ic(4, 6, svg`<path d="M0 0v6L4 3Z" fill="#bbb"/>`)}
          <div class="tabrow">${SHEETS.map(([name, tone, w]) => html`<div class="tab ${tone}">${ft(name, w)}</div>`)}</div>
          ${ICONS.plus}${dots}
          <div class="hs">
            <div>${ic(4, 6, svg`<path d="M4 0v6L0 3Z" fill="#555"/>`)}</div><div></div><div>${ic(4, 6, svg`<path d="M0 0v6L4 3Z" fill="#555"/>`)}</div>
          </div>
        </div>
        <div class="status">
          <span></span>${ft("Excel  Contable", 63)}
          <div class="vn">${ICONS.viewNormal}</div><div class="c">${ICONS.viewPage}</div><div class="c">${ICONS.viewBreak}</div><span></span>
          ${ic(90, 10, svg`<path d="M0 5h5M92 5h7M95.500 1.500v7" stroke="#fff" stroke-width="1.600"/><path d="M8 5h81" stroke="#b8d3c3"/><path d="M45 .5h3.500v9H45Z" fill="#fff"/>`)}
          <span></span>${ft("100 %", 24)}
        </div>
        <div class="task">
          <svg class="streaks" width="1280" height="31"><path d="M138 0h12l-18 31h-13ZM445 0h12L427 31h-16ZM843 0h21L833 31h-20Z" fill="#2c5568" opacity=".8"/></svg>
          <div class="start">${ICONS.windows}</div>
          <div class="pins">
            ${[ICONS.folder, ICONS.chrome, ICONS.paint, ICONS.notepad, ICONS.fist, ICONS.excelBig].map((icon, i) => html`<div class=${classMap({ pin: true, live: i === 5 })}>${icon}</div>`)}
          </div>
          <span></span>
          ${ic(6, 4, svg`<path d="M0 4h6L3 0Z" fill="#fff"/>`)}${ICONS.network}
          <span class="tray">${ft("ESP", 15)}</span>
          <div class="clock">${ft("19:50", 22)}${ft("29/07/2019", 47)}</div>
        </div>
      </div>`;
  }
}
